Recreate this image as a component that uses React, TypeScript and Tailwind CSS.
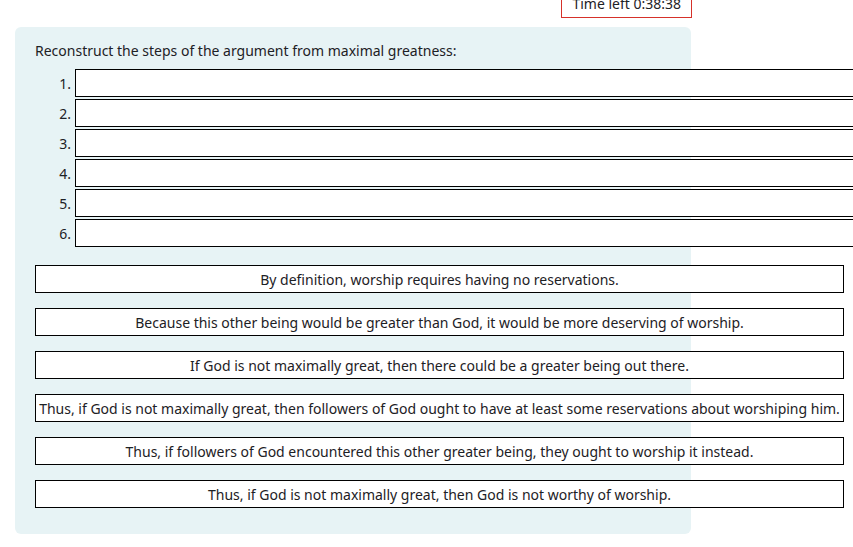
export default function App() {
  const steps = [1, 2, 3, 4, 5, 6];
  const items = [
    "By definition, worship requires having no reservations.",
    "Because this other being would be greater than God, it would be more deserving of worship.",
    "If God is not maximally great, then there could be a greater being out there.",
    "Thus, if God is not maximally great, then followers of God ought to have at least some reservations about worshiping him.",
    "Thus, if followers of God encountered this other greater being, they ought to worship it instead.",
    "Thus, if God is not maximally great, then God is not worthy of worship.",
  ];

  return (
    <div className="h-[547px] w-[853px] overflow-hidden bg-white font-['Segoe_UI','Noto_Sans',sans-serif] text-[14px] text-[#1d2125]">
      <div className="ml-[15px] w-[676px]">
        {/* timer, scrolled partly off the top */}
        <div className="relative z-10 flex h-[27px] justify-end">
          <div className="-mt-[12px] mr-[-1px] flex h-[30px] items-center border border-solid border-[#d6312a] bg-white px-[10px]">
            Time left 0:38:38
          </div>
        </div>

        <div className="rounded-md bg-[#e7f3f5] px-[20px] pb-[26px] pt-[13px]">
          <p className="mb-[8px] leading-[21px]">
            Reconstruct the steps of the argument from maximal greatness:
          </p>

          <ol className="flex flex-col gap-[2px]">
            {steps.map((n) => (
              <li key={n} className="flex h-[28px] items-center gap-[4px]">
                <span className="w-[36px] shrink-0 text-right">{n}.</span>
                <div className="h-[28px] w-[800px] shrink-0 border border-black bg-white" />
              </li>
            ))}
          </ol>

          <ul className="mt-[18px] flex flex-col gap-[15px]">
            {items.map((t) => (
              <li
                key={t}
                className="flex h-[28px] w-[809px] items-center justify-center border border-black bg-white whitespace-nowrap"
              >
                {t}
              </li>
            ))}
          </ul>
        </div>
      </div>
    </div>
  );
}
